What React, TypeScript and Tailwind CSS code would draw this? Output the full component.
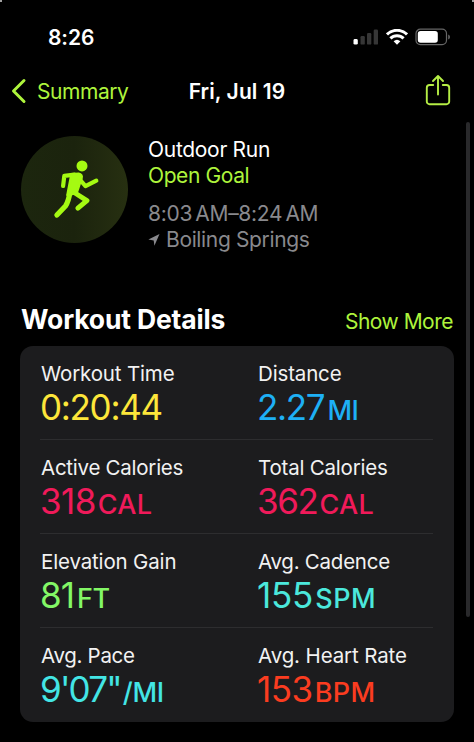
type Metric = {
  label: string
  labelSpacing: string
  value: string
  unit?: string
  color: string
  valueSpacing: string
  unitSpacing?: string
}

const rows: Metric[][] = [
  [
    { label: 'Workout Time', labelSpacing: 'tracking-[-0.15px]', value: '0:20:44', color: 'text-[#fde63a]', valueSpacing: 'tracking-[-1.3px]' },
    { label: 'Distance', labelSpacing: 'tracking-[-0.15px]', value: '2.27', unit: 'MI', color: 'text-[#1eb0f5]', valueSpacing: 'tracking-[-1.3px]', unitSpacing: 'ml-[3px] tracking-[-0.5px]' },
  ],
  [
    { label: 'Active Calories', labelSpacing: 'tracking-[-0.25px]', value: '318', unit: 'CAL', color: 'text-[#f01a5a]', valueSpacing: 'tracking-[-0.6px]', unitSpacing: 'ml-[2px] tracking-[0.3px]' },
    { label: 'Total Calories', labelSpacing: 'tracking-[-0.2px]', value: '362', unit: 'CAL', color: 'text-[#f01a5a]', valueSpacing: 'tracking-[-1.4px]', unitSpacing: 'ml-[2px] tracking-[0.3px]' },
  ],
  [
    { label: 'Elevation Gain', labelSpacing: 'tracking-[-0.15px]', value: '81', unit: 'FT', color: 'text-[#83f766]', valueSpacing: 'tracking-[-1px]', unitSpacing: 'ml-[3px] tracking-[-0.2px]' },
    { label: 'Avg. Cadence', labelSpacing: 'tracking-[-0.25px]', value: '155', unit: 'SPM', color: 'text-[#4be8dc]', valueSpacing: 'tracking-[-0.2px]', unitSpacing: 'ml-[2px] tracking-[0.5px]' },
  ],
  [
    { label: 'Avg. Pace', labelSpacing: 'tracking-[-0.3px]', value: '9\'07"', unit: '/MI', color: 'text-[#43e5e5]', valueSpacing: 'tracking-[-1.8px]', unitSpacing: 'ml-[2px] tracking-[-0.3px]' },
    { label: 'Avg. Heart Rate', labelSpacing: 'tracking-[-0.12px]', value: '153', unit: 'BPM', color: 'text-[#fb3c20]', valueSpacing: 'tracking-[-0.5px]', unitSpacing: 'ml-[2px] tracking-[0.4px]' },
  ],
]

function StatusBar() {
  return (
    <div className="flex h-[74px] items-center justify-between pl-12 pr-[23px]">
      <span className="relative top-px text-[21px] font-semibold tracking-[-0.1px]">8:26</span>
      <div className="flex items-center">
        <svg width="26" height="16" viewBox="0 0 26 16">
          <rect x="0.5" y="10" width="4.3" height="5.6" rx="1.4" fill="#fff" />
          <rect x="7.5" y="7" width="4.3" height="8.6" rx="1.2" fill="#363636" />
          <rect x="14" y="4" width="4.3" height="11.6" rx="1.2" fill="#363636" />
          <rect x="20.7" y="0.5" width="4.3" height="15.1" rx="1.2" fill="#363636" />
        </svg>
        <svg className="ml-[7px]" width="22" height="16" viewBox="0 0 22 16" fill="none" stroke="#fff" strokeWidth="3">
          <path d="M1 5.4a14.3 14.3 0 0 1 20 0" />
          <path d="M4.4 9.4a9.4 9.4 0 0 1 13.2 0" />
          <path d="M7.6 12.3a5 5 0 0 1 6.8 0L11 15.8z" fill="#fff" stroke="none" />
        </svg>
        <svg className="ml-[7px]" width="36" height="18" viewBox="0 0 36 18">
          <rect x="1" y="1.2" width="30.5" height="15.4" rx="4.4" fill="none" stroke="#666" strokeWidth="1.2" />
          <rect x="2.8" y="3" width="20" height="11.8" rx="2.8" fill="#fff" />
          <path d="M33.3 6.4c2 .8 2 4.2 0 5z" fill="#777" />
        </svg>
      </div>
    </div>
  )
}

function NavBar() {
  return (
    <div className="grid h-[34px] grid-cols-[1fr_auto_1fr] items-center pl-[11px] pr-[11px]">
      <div className="flex items-center text-[#aef43c]">
        <svg width="16" height="26" viewBox="0 0 16 26" fill="none" stroke="currentColor" strokeWidth="3" strokeLinecap="round" strokeLinejoin="round">
          <path d="M13 2.5L2.5 13L13 23.5" />
        </svg>
        <span className="ml-[10px] pt-px text-[21px] tracking-[-0.45px]">Summary</span>
      </div>
      <span className="whitespace-nowrap pt-px text-center text-[21px] font-semibold tracking-[0.1px]">Fri, Jul 19</span>
      <svg className="mr-3 justify-self-end" width="26" height="34" viewBox="0 0 26 34" fill="none" stroke="#b5ee45" strokeWidth="1.9" strokeLinecap="round" strokeLinejoin="round">
        <path d="M8.2 11H4.6A2.8 2.8 0 0 0 1.8 13.8V27.4A2.8 2.8 0 0 0 4.6 30.2H21.4A2.8 2.8 0 0 0 24.2 27.4V13.8A2.8 2.8 0 0 0 21.4 11H17.8" />
        <path d="M13 20.5V2.5M8 7L13 2L18 7" />
      </svg>
    </div>
  )
}

function Runner() {
  return (
    <div className="h-[107px] w-[107px] shrink-0 rounded-full bg-linear-to-r from-[#1c260e] via-[#1b230d] to-[#273011]">
      <svg width="107" height="107" viewBox="0 0 107 107" fill="none" stroke="#a5fa12" strokeLinecap="round" strokeLinejoin="round">
        <circle cx="61" cy="29.9" r="5.5" fill="#a5fa12" stroke="none" />
        <path d="M42.1 50L43.3 39.9L53.5 38.6" strokeWidth="4.2" />
        <path d="M57.5 42L64.5 50.2L75.3 44.6" strokeWidth="4.2" />
        <path d="M50.5 38.2L57.5 37.8Q61.5 38.8 60.5 42L55.5 57L46.5 59Z" fill="#a5fa12" strokeWidth="2.6" />
        <path d="M49 56Q47.5 65.5 44.5 70L35.9 79" strokeWidth="5.2" />
        <path d="M54 57L65.9 64.6L56.9 72.2" strokeWidth="5" />
      </svg>
    </div>
  )
}

function MetricCell({ metric }: { metric: Metric }) {
  return (
    <div className="whitespace-nowrap pl-px">
      <div className={`text-[20.5px] leading-[26px] text-[#f2f2f2] ${metric.labelSpacing}`}>{metric.label}</div>
      <div className={`text-[35px] leading-[40px] ${metric.color}`}>
        <span className={`-ml-px ${metric.valueSpacing}`}>{metric.value}</span>
        {metric.unit && <span className={`text-[27px] font-medium ${metric.unitSpacing}`}>{metric.unit}</span>}
      </div>
    </div>
  )
}

export default function App() {
  return (
    <div className="relative h-[742px] w-[474px] overflow-hidden bg-black font-['Inter',sans-serif] text-white">
      <StatusBar />
      <NavBar />

      <section className="flex pl-[20.5px] pt-7">
        <Runner />
        <div className="ml-[20.5px] whitespace-nowrap pt-px text-[21px] leading-[26px]">
          <p className="tracking-[-0.3px]">Outdoor Run</p>
          <p className="tracking-[-0.4px] text-[#aef43c]">Open Goal</p>
          <p className="mt-3 tracking-[-0.3px] text-[#89898d]">8:03&#8202;&#8202;AM–8:24&#8202;&#8202;AM</p>
          <p className="flex items-center tracking-[-0.35px] text-[#89898d]">
            <svg className="mr-[6px]" width="12" height="14" viewBox="0 0 12 14" fill="currentColor">
              <path d="M11.5 1L.4 6.6L5.7 7.4L6.4 12.8z" />
            </svg>
            Boiling Springs
          </p>
        </div>
      </section>

      <div className="mt-[50px] flex items-baseline justify-between pl-[21px] pr-[21px]">
        <h2 className="text-[26.5px] font-bold leading-8 tracking-[-0.15px]">Workout Details</h2>
        <span className="text-[21px] tracking-[-0.5px] text-[#aef43c]">Show More</span>
      </div>

      <section className="mx-5 mt-2 h-[376px] rounded-[13px] bg-[#1c1c1e] pl-5 pr-[21px]">
        {rows.map((row, i) => (
          <div key={i} className="grid h-[94px] grid-cols-[217px_1fr] border-b border-[#2d2d2f] pt-[15px] last:border-b-0">
            {row.map((metric) => (
              <MetricCell key={metric.label} metric={metric} />
            ))}
          </div>
        ))}
      </section>

      <div className="absolute left-[466px] top-[122px] h-[495px] w-1 rounded-full bg-[#29292b]" />
      <div className="absolute left-0 top-0 size-0.5 bg-[#a0a0a0]" />
      <div className="absolute right-0 top-0 size-0.5 bg-[#a0a0a0]" />
    </div>
  )
}
